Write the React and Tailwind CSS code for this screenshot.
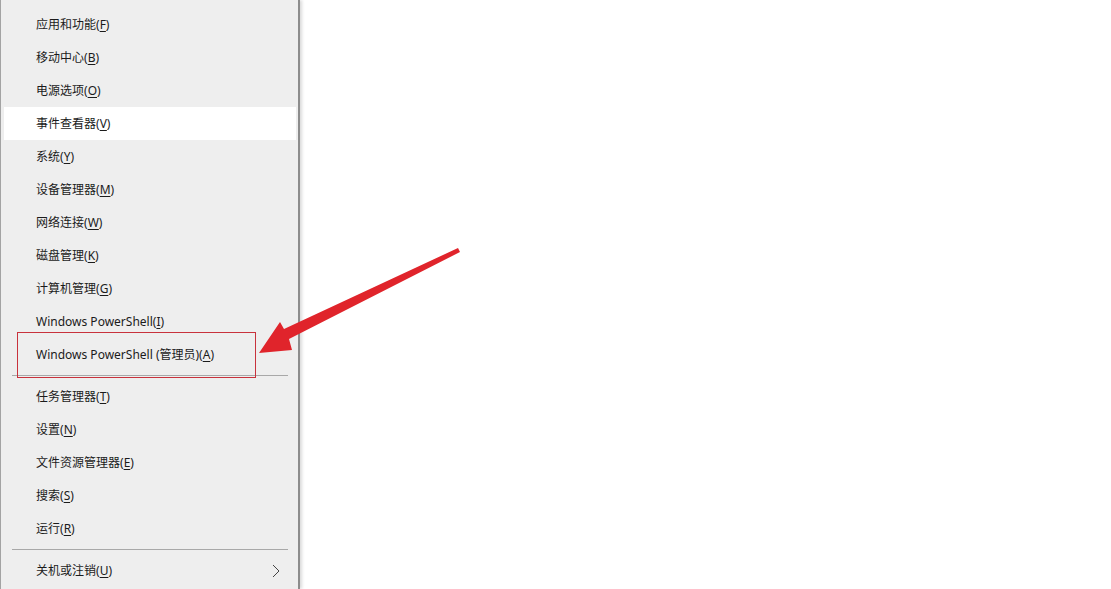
import React from "react";

const groups = [
  [
    ["应用和功能", "F"],
    ["移动中心", "B"],
    ["电源选项", "O"],
    ["事件查看器", "V", true],
    ["系统", "Y"],
    ["设备管理器", "M"],
    ["网络连接", "W"],
    ["磁盘管理", "K"],
    ["计算机管理", "G"],
    ["Windows PowerShell", "I"],
    ["Windows PowerShell (管理员)", "A"],
  ],
  [
    ["任务管理器", "T"],
    ["设置", "N"],
    ["文件资源管理器", "E"],
    ["搜索", "S"],
    ["运行", "R"],
  ],
];

function MenuRow({ label, hotkey, active, arrow }) {
  return (
    <div
      className={
        "flex items-center h-[33px] pl-8 pr-3 text-[12px] text-[#1b1b1b] " +
        (active ? "bg-white" : "")
      }
    >
      <span className="flex-1 whitespace-pre">
        {label}(<span className="underline underline-offset-2">{hotkey}</span>)
      </span>
      {arrow && (
        <svg width="8" height="14" viewBox="0 0 8 14" className="mr-1">
          <path d="M1 1 L7 7 L1 13" fill="none" stroke="#444" strokeWidth="1" />
        </svg>
      )}
    </div>
  );
}

function Separator() {
  return (
    <div className="py-1 pl-2 pr-2">
      <div className="h-px bg-[#a8a8a8]" />
    </div>
  );
}

export default function App() {
  return (
    <div
      className="relative w-[1111px] h-[589px] bg-white overflow-hidden"
      style={{ fontFamily: '"Noto Sans", "Noto Sans CJK SC", sans-serif' }}
    >
      <div className="w-[300px] h-full bg-[#eeeeee] border-l border-[#a3a3a3] border-r-2 border-r-[#8c8c8c] shadow-[2px_0_3px_rgba(0,0,0,0.15)] pt-2 pl-[3px] pr-[2px]">
        {groups[0].map(([l, k, a]) => (
          <MenuRow key={l} label={l} hotkey={k} active={a} />
        ))}
        <Separator />
        {groups[1].map(([l, k]) => (
          <MenuRow key={l} label={l} hotkey={k} />
        ))}
        <Separator />
        <MenuRow label="关机或注销" hotkey="U" arrow />
      </div>

      {/* highlight box */}
      <div className="absolute left-[17px] top-[332px] w-[239px] h-[46px] border border-[#c8323c]" />

      {/* arrow */}
      <svg
        className="absolute left-0 top-0"
        width="1111"
        height="589"
        viewBox="0 0 1111 589"
      >
        <polygon
          points="259,353 280,322 284,329 458,248 460,252 289,339 292,350"
          fill="#e0242b"
        />
      </svg>
    </div>
  );
}
